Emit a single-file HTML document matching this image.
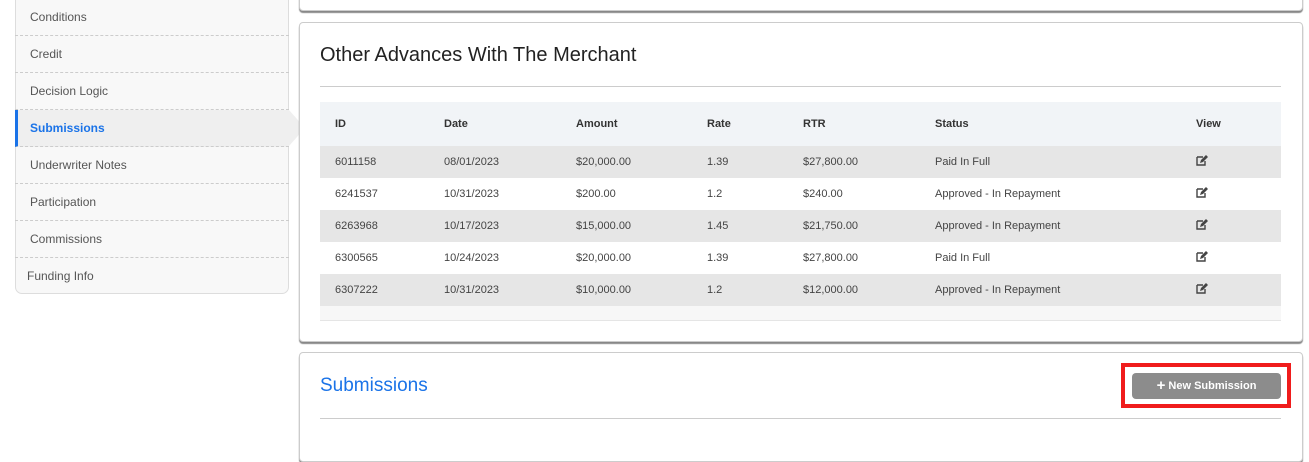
<!DOCTYPE html>
<html><head><style>
*{box-sizing:border-box;margin:0;padding:0}
body{width:1309px;height:442px;background:#fff;position:relative;overflow:hidden;font-family:"Liberation Sans",Arial,sans-serif;color:#333}
.side{position:absolute;left:15px;top:-20px;width:274px;height:314px;background:#f8f8f8;border:1px solid #ddd;border-radius:7px}
.it{position:absolute;left:15px;width:274px;height:37px;font-size:12px;color:#555;line-height:37px;padding-left:15px;border-bottom:1px dashed #ccc}
.act{background:#efefef;color:#1a73e8;font-weight:bold;border-left:3px solid #1a73e8;padding-left:12px}
.arrow{position:absolute;left:289px;top:110px;width:0;height:0;border-top:18px solid transparent;border-bottom:18px solid transparent;border-left:16px solid #efefef}
.panel{position:absolute;left:299px;width:1004px;background:#fff;border:1px solid #ccc;border-radius:4px;box-shadow:0 2px 1px #888}
h2{position:absolute;left:320px;font-weight:normal}
.hr{position:absolute;left:320px;width:961px;height:1px;background:#ccc}
table{position:absolute;left:320px;top:102px;width:961px;border-collapse:collapse;font-size:11px;color:#444}
td,th{text-align:left;padding:0 0 0 15px;height:32px}
th{height:44px;background:#f1f4f7;font-weight:bold;color:#333}
tr.o td{background:#e6e6e6}
.ed{display:inline-block;width:12px;height:11px}
</style></head><body>
<div class="side"></div>
<div class="it" style="top:-1px">Conditions</div>
<div class="it" style="top:36px">Credit</div>
<div class="it" style="top:73px">Decision Logic</div>
<div class="it act" style="top:110px">Submissions</div>
<div class="arrow"></div>
<div class="it" style="top:147px">Underwriter Notes</div>
<div class="it" style="top:184px">Participation</div>
<div class="it" style="top:221px">Commissions</div>
<div class="it" style="top:258px;border:none;padding-left:12px">Funding Info</div>

<div class="panel" style="top:-10px;height:21px"></div>
<div class="panel" style="top:22px;height:320px"></div>
<h2 style="top:44px;font-size:20px;color:#222">Other Advances With The Merchant</h2>
<div class="hr" style="top:86px"></div>
<div style="position:absolute;left:320px;top:305px;width:961px;height:16px;background:#f7f7f7;border-bottom:1px solid #e5e5e5"></div>
<table>
<colgroup><col style="width:109px"><col style="width:132px"><col style="width:131px"><col style="width:96px"><col style="width:132px"><col style="width:261px"><col></colgroup>
<tr><th>ID</th><th>Date</th><th>Amount</th><th>Rate</th><th>RTR</th><th>Status</th><th>View</th></tr>
<tr class="o"><td>6011158</td><td>08/01/2023</td><td>$20,000.00</td><td>1.39</td><td>$27,800.00</td><td>Paid In Full</td><td>ED</td></tr>
<tr><td>6241537</td><td>10/31/2023</td><td>$200.00</td><td>1.2</td><td>$240.00</td><td>Approved - In Repayment</td><td>ED</td></tr>
<tr class="o"><td>6263968</td><td>10/17/2023</td><td>$15,000.00</td><td>1.45</td><td>$21,750.00</td><td>Approved - In Repayment</td><td>ED</td></tr>
<tr><td>6300565</td><td>10/24/2023</td><td>$20,000.00</td><td>1.39</td><td>$27,800.00</td><td>Paid In Full</td><td>ED</td></tr>
<tr class="o"><td>6307222</td><td>10/31/2023</td><td>$10,000.00</td><td>1.2</td><td>$12,000.00</td><td>Approved - In Repayment</td><td>ED</td></tr>
</table>

<div class="panel" style="top:352px;height:110px"></div>
<h2 style="top:375px;font-size:19px;color:#1a73e8">Submissions</h2>
<div class="hr" style="top:418px"></div>
<div style="position:absolute;left:1121px;top:363px;width:170px;height:45px;border:4px solid #f01c1c"></div>
<div style="position:absolute;left:1132px;top:373px;width:149px;height:26px;background:#8c8c8c;border-radius:4px;color:#fff;font-size:11px;font-weight:bold;text-align:center;line-height:26px"><span style="font-size:15px;vertical-align:-1px">+</span> New Submission</div>
<script>
document.querySelectorAll('td').forEach(function(t){if(t.textContent==='ED'){t.innerHTML='<svg class="ed" viewBox="0 0 12 11"><path d="M1 2h6M1 2v8h8V6" fill="none" stroke="#444" stroke-width="1.4"/><path d="M4 8l1-3 5-5 2 2-5 5z" fill="#444"/></svg>';}});
</script>
</body></html>
